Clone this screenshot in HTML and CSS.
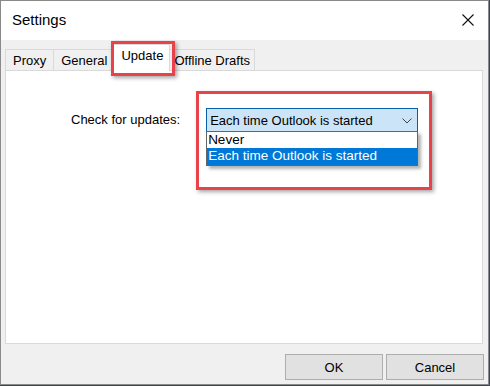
FILE: index.html
```html
<!DOCTYPE html>
<html lang="en">
<head>
    <meta charset="UTF-8">
    <title>Settings</title>
    <link rel="stylesheet" href="styles.css">
</head>
<body>
    <div class="window">
        <div class="title-bar">
            <span class="title">Settings</span>
            <svg class="close" width="12" height="12" viewBox="0 0 12 12">
                <path d="M0.5 0.5 L11.5 11.5 M11.5 0.5 L0.5 11.5" stroke="#111" stroke-width="1.1" fill="none"/>
            </svg>
        </div>

        <div class="dialog-body">
            <div class="tabs">
                <div class="tab">Proxy</div>
                <div class="tab">General</div>
                <div class="tab active">
                    Update
                    <div class="highlight tab-highlight"></div>
                </div>
                <div class="tab">Offline Drafts</div>
            </div>

            <div class="panel">
                <div class="form-row">
                    <span class="label">Check for updates:</span>
                    <div class="combo-wrap">
                        <div class="combo">
                            <span>Each time Outlook is started</span>
                            <svg class="chevron" width="10" height="6" viewBox="0 0 10 6">
                                <path d="M0.5 0.5 L5 5 L9.5 0.5" stroke="#444" stroke-width="1" fill="none"/>
                            </svg>
                        </div>
                        <div class="dropdown">
                            <div class="option">Never</div>
                            <div class="option selected">Each time Outlook is started</div>
                        </div>
                        <div class="highlight combo-highlight"></div>
                    </div>
                </div>
            </div>

            <div class="buttons">
                <button class="btn">OK</button>
                <button class="btn">Cancel</button>
            </div>
        </div>
    </div>
</body>
</html>
```

FILE: styles.css
```css
body {
    margin: 0;
    width: 490px;
    height: 386px;
    background-color: #3d4650;
    font-family: "Liberation Sans", Arial, sans-serif;
    font-size: 13px;
    color: #000;
    overflow: hidden;
}

.window {
    width: 489px;
    height: 385px;
    box-sizing: border-box;
    border: 1px solid #8a8a8a;
    background-color: #f0f0f0;
    display: flex;
    flex-direction: column;
}

.title-bar {
    height: 39px;
    background-color: #fff;
    display: flex;
    align-items: center;
    justify-content: space-between;
    padding: 0 14px 0 11px;
    flex-shrink: 0;
}

.title {
    font-size: 15px;
    margin-top: -3px;
}

.close {
    margin-top: -1px;
}

.dialog-body {
    flex: 1;
    display: flex;
    flex-direction: column;
    padding: 8px 5px 0 4px;
}

.tabs {
    display: flex;
    align-items: flex-end;
    height: 22px;
    position: relative;
    z-index: 2;
}

.tab {
    height: 21px;
    box-sizing: border-box;
    border: 1px solid #d9d9d9;
    border-bottom: none;
    border-right: none;
    padding: 3px 7px 0 7px;
    background-color: #f0f0f0;
    white-space: nowrap;
    position: relative;
}

.tab:nth-child(4) {
    border-right: 1px solid #d9d9d9;
    padding-right: 4px;
    padding-left: 4px;
}

.tab.active {
    background-color: #fff;
    border-right: 1px solid #d9d9d9;
    padding: 3px 6px 0 7px;
    margin-left: -1px;
    margin-right: -1px;
    margin-bottom: -1px;
    height: 27px;
    z-index: 3;
}

.panel {
    height: 274px;
    box-sizing: border-box;
    background-color: #fff;
    border: 1px solid #d9d9d9;
}

.form-row {
    display: flex;
    align-items: center;
    padding: 37px 0 0 65px;
}

.label {
    margin-right: 26px;
    margin-top: -2px;
}

.combo-wrap {
    position: relative;
}

.combo {
    width: 212px;
    height: 24px;
    box-sizing: border-box;
    border: 1px solid #0a5fab;
    background-color: #cce4f7;
    display: flex;
    align-items: center;
    justify-content: space-between;
    padding: 0 5px 0 3px;
}

.chevron {
    margin-top: 1px;
}

.dropdown {
    position: absolute;
    left: 0;
    top: 23px;
    width: 212px;
    box-sizing: border-box;
    border: 1px solid #646464;
    background-color: #fff;
    box-shadow: 3px 3px 3px rgba(0, 0, 0, 0.3);
    z-index: 4;
}

.option {
    height: 16px;
    line-height: 16px;
    padding-left: 1px;
    font-size: 13.5px;
}

.option.selected {
    height: 17px;
    background-color: #0078d7;
    color: #fff;
}

.highlight {
    position: absolute;
    box-sizing: border-box;
    border: 3px solid #e8434b;
    box-shadow: 2px 2px 4px rgba(0, 0, 0, 0.35);
    pointer-events: none;
    z-index: 5;
}

.tab-highlight {
    left: -3px;
    top: -4px;
    width: 64px;
    height: 35px;
}

.combo-highlight {
    left: -10px;
    top: -17px;
    width: 236px;
    height: 99px;
}

.buttons {
    display: flex;
    justify-content: flex-end;
    gap: 3px;
    padding-top: 10px;
    margin-right: -1px;
}

.btn {
    width: 98px;
    height: 26px;
    box-sizing: border-box;
    border: 1px solid #adadad;
    background-color: #e1e1e1;
    font-family: "Liberation Sans", Arial, sans-serif;
    font-size: 13px;
    color: #000;
    padding: 0;
}
```
